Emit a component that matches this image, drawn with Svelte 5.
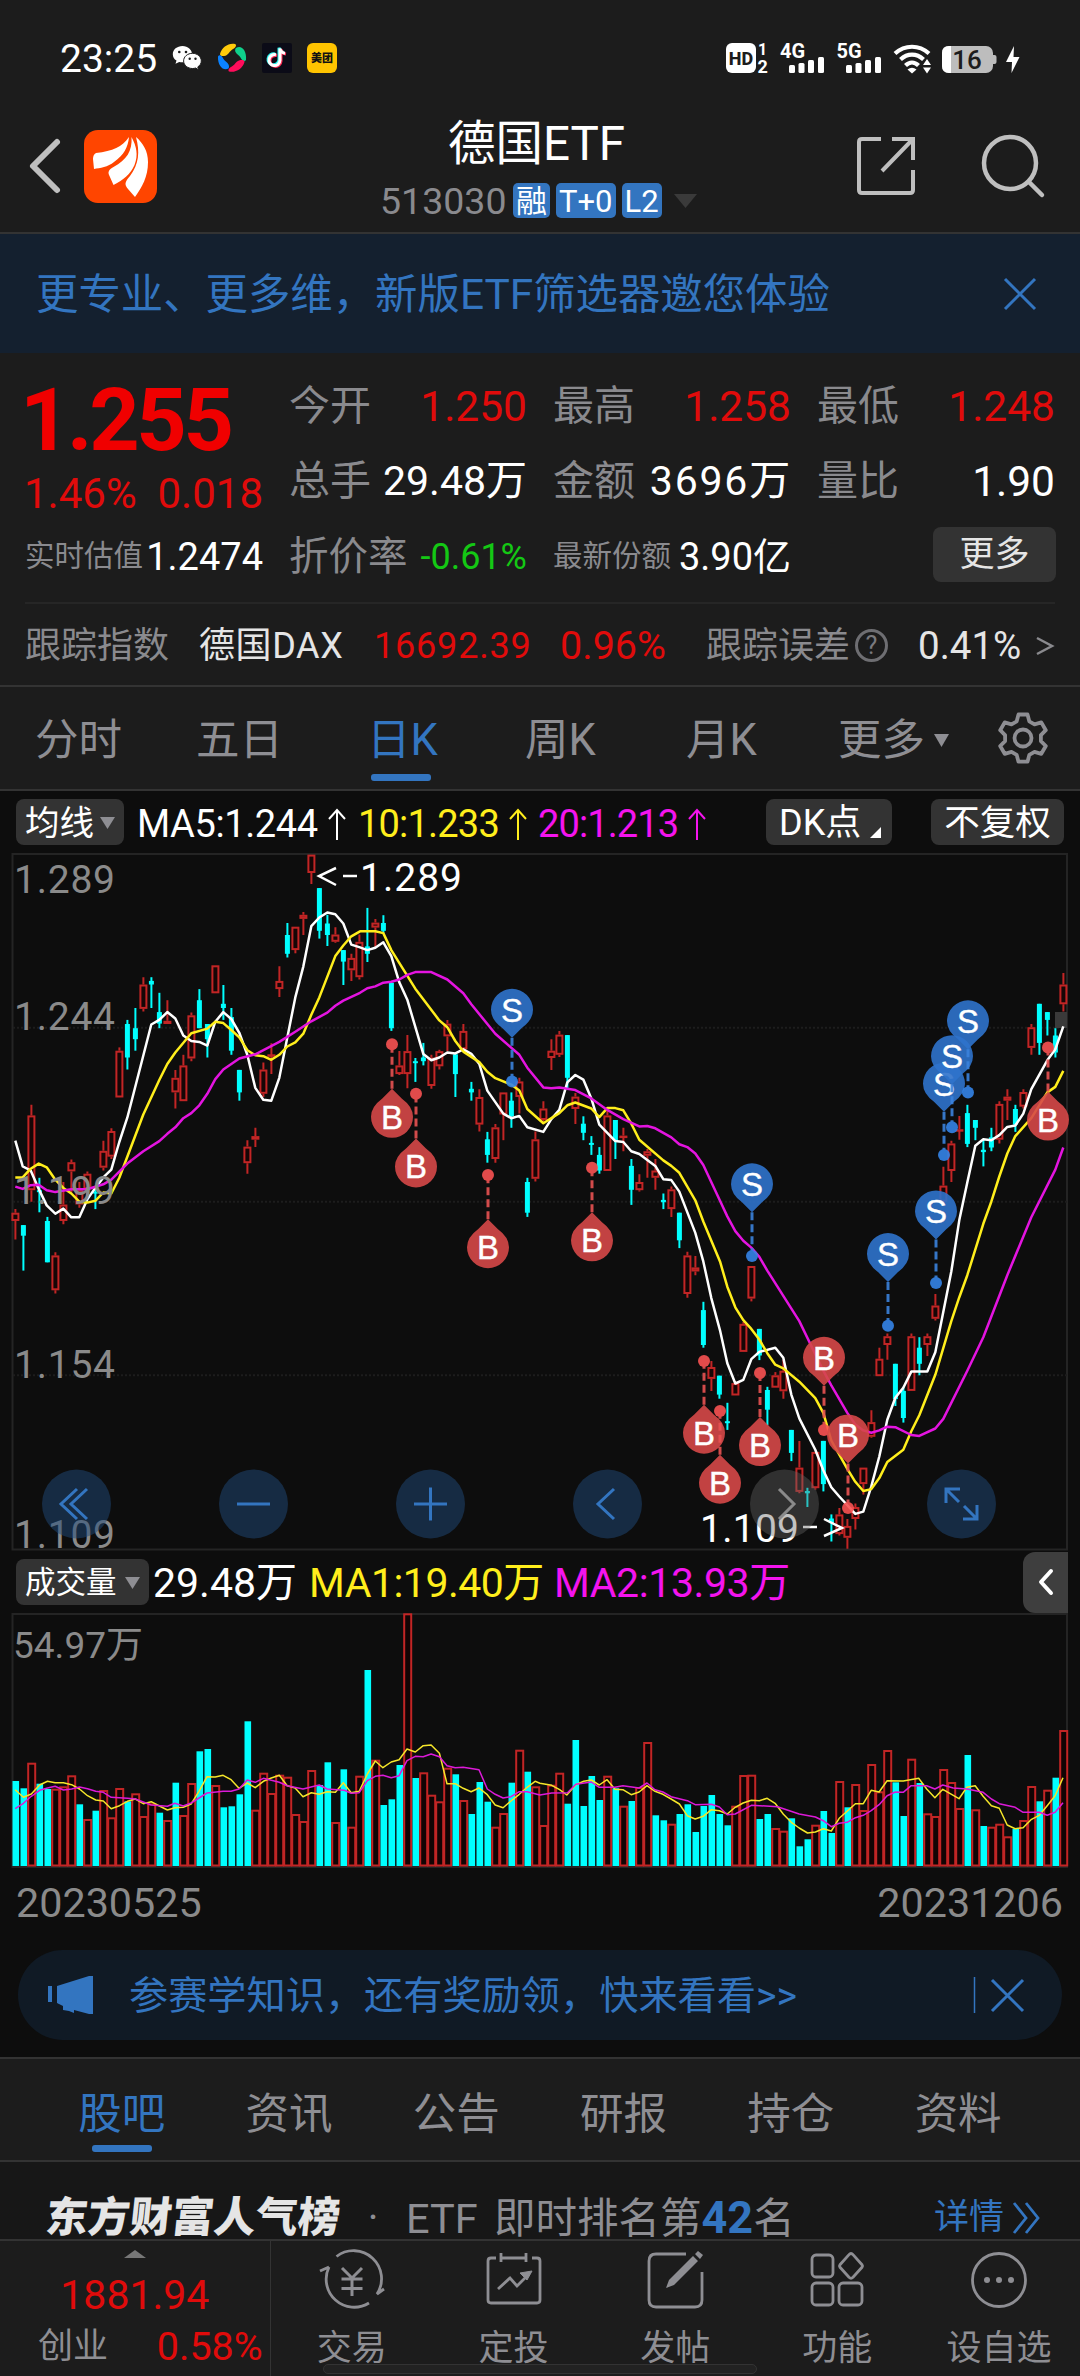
<script lang="ts">
	/**
	 * ETF quote screen: header, quote figures, daily K-line chart with
	 * moving averages and buy / sell pins, volume chart, tabs and toolbar.
	 */

	type Bar = { x: number; high: number; top: number; bottom: number; low: number; up: boolean };
	type Pin = { x: number; y: number; dot: number; kind: 'B' | 'S' };

	const STEP = 8;
	const px = (n: number) => Math.round(n * 10) / 10;
	const priceY = (v: number) => px(v / 2.178 - 14);
	const volumeY = (v: number) => px(v / 3 - 74);

	// high, body top, body bottom, low, direction
	const candleData = `
		806,814,832,872,u 841,841,864,940,d 579,602,765,790,u 738,765,768,813,d 823,832,922,922,d 900,907,983,990,u
		747,796,832,839,u 698,704,724,770,u 747,765,796,803,u 724,729,763,780,u 760,768,772,806,d 657,679,716,722,u
		630,636,692,697,u 454,461,563,563,u 394,403,476,502,d 368,412,436,461,d 301,317,370,376,u 301,309,317,368,d
		335,377,402,412,d 351,396,403,403,u 503,520,552,587,u 470,493,571,571,u 378,384,478,484,u 327,351,412,412,d
		403,403,436,476,d 275,275,336,336,u 318,359,368,394,d 368,388,461,470,d 503,503,552,570,d 656,670,706,729,u
		629,647,655,671,u 487,502,555,562,u 445,469,469,512,u 277,309,327,344,u 183,209,250,258,d 191,191,242,249,u
		159,165,174,209,u 34,34,74,98,u 107,107,200,217,d 165,184,209,233,d 192,208,224,226,u 242,242,267,318,d
		250,259,286,309,u 208,224,301,306,u 150,234,250,268,d 174,182,193,235,u 166,183,200,205,d 313,313,412,418,d
		462,493,512,514,u 427,462,512,543,u 477,484,488,529,d 444,476,484,493,d 470,476,538,544,u 459,462,495,502,u
		394,402,430,462,u 469,469,512,562,d 403,418,458,462,u 529,544,552,570,d 545,562,622,637,u 638,654,688,705,d
		621,628,697,705,u 552,552,600,656,u 552,570,604,629,d 520,528,562,598,u 738,747,814,823,d 637,654,740,746,u
		571,587,612,615,u 436,461,477,503,u 418,426,470,475,u 427,427,520,545,d 553,561,588,621,u 604,620,640,656,d
		647,662,666,688,d 671,688,722,729,d 590,602,723,723,u 612,612,656,697,d 629,646,647,680,u 697,712,764,797,d
		730,747,765,768,u 675,680,690,738,u 697,722,738,764,u 772,786,791,806,d 757,763,806,823,u 814,814,874,891,d
		899,907,991,999,u 908,933,942,950,u 1008,1026,1102,1108,d 1137,1150,1176,1202,u 1169,1169,1210,1219,d 1228,1268,1272,1287,d
		1185,1185,1212,1212,u 1052,1056,1117,1117,u 930,930,1001,1007,u 1067,1067,1125,1135,d 1193,1200,1243,1277,d 1161,1168,1195,1195,u
		1135,1158,1203,1219,u 1287,1287,1337,1355,d 1311,1369,1422,1425,u 1413,1420,1425,1455,d 1335,1335,1414,1417,u 1311,1311,1405,1421,d
		1471,1480,1490,1530,d 1457,1471,1514,1517,u 1481,1496,1522,1546,u 1447,1455,1481,1504,u 1369,1369,1405,1428,u 1244,1270,1302,1304,u
		1108,1132,1170,1170,u 1077,1083,1102,1134,u 1143,1143,1220,1235,d 1193,1202,1261,1271,d 1077,1083,1202,1202,u 1085,1108,1143,1168,d
		1077,1083,1102,1126,u 991,1016,1045,1049,u 714,755,790,795,u 657,663,723,747,u 603,632,634,655,u 579,597,664,671,d
		612,612,629,656,d 655,677,682,713,d 629,650,672,680,d 571,577,655,663,u 545,561,570,612,u 579,588,622,638,d
		545,551,583,587,u 403,410,455,470,u 359,359,444,470,d 377,377,394,428,d 412,428,465,476,d 292,317,360,376,u`;

	const candles: Bar[] = candleData
		.trim()
		.split(/\s+/)
		.map((row, i) => {
			const [h, t, b, l, dir] = row.split(',');
			return {
				x: px(15.4 + i * STEP),
				high: priceY(+h),
				top: priceY(+t),
				bottom: priceY(+b),
				low: priceY(+l),
				up: dir === 'u'
			};
		});

	// Each average is stored as panels; x restarts at 0 in every panel
	function line(panels: string[], panelWidth: number, fx: number, fy: (v: number) => number) {
		return panels
			.flatMap((panel, p) =>
				panel.split(' ').map((pair) => {
					const [x, y] = pair.split(',').map(Number);
					return `${px((x + p * panelWidth) / fx)},${fy(y)}`;
				})
			)
			.join(' ');
	}

	const ma5 = line(
		[
			'46,657 68,713 92,722 116,762 140,798 166,816 190,805 214,824 238,824 262,785 286,760 310,737 334,720 358,660 382,607 454,404 478,394 502,377 526,391 550,428 574,440 598,442 622,450 646,398 670,377 694,392 718,422 742,470 766,542 790,568 814,570 838,520 886,345 910,278 934,190 958,171 982,160 1006,164 1030,184 1054,230 1080,236',
			'22,242 46,237 70,225 94,255 118,312 142,350 190,468 214,482 238,476 262,465 286,467 310,458 334,468 358,490 382,548 430,598 454,608 478,603 502,628 550,638 574,610 598,590 622,530 646,514 670,524 694,565 718,622 766,658 790,660 814,680 838,686 886,712 910,741 934,743 958,768 1006,858 1030,920 1054,1000 1080,1070',
			'22,1142 46,1186 70,1178 94,1133 118,1117 166,1108 190,1130 214,1210 238,1262 286,1330 310,1375 334,1412 358,1432 406,1470 430,1465 454,1410 478,1345 502,1265 526,1217 550,1195 574,1160 622,1160 646,1118 694,942 718,830 742,748 766,668 790,654 814,656 838,645 862,627 886,624 910,598 934,545 982,482 1006,458 1030,408'
		],
		1080,
		3,
		priceY
	);
	const ma10 = line(
		[
			'46,737 68,737 92,718 116,707 140,715 166,742 190,760 214,772 238,790 262,792 286,788 310,770 334,772 358,738 382,692 430,600 478,525 502,490 526,465 574,423 622,413 646,398 670,401 694,416 718,432 742,460 766,471 790,473 814,481 838,470 862,452 886,443 910,424 934,383 958,345 1006,255 1030,232 1054,212 1080,201',
			'46,201 70,205 94,242 166,326 238,395 262,410 286,440 310,463 358,486 382,507 406,521 454,535 478,548 502,588 550,619 598,597 622,580 646,574 694,587 718,606 742,586 766,586 790,591 814,620 838,655 910,700 934,712 958,727 1006,787 1030,833 1080,920',
			'22,975 46,1020 70,1048 94,1067 118,1090 142,1120 166,1145 190,1153 238,1182 286,1218 310,1250 334,1310 382,1372 406,1400 430,1420 454,1416 478,1392 502,1357 550,1330 574,1290 598,1255 646,1167 694,1050 718,998 742,950 790,838 814,790 838,735 862,685 886,647 934,608 982,552 1006,540 1030,505'
		],
		1080,
		3,
		priceY
	);
	const ma20 = line(
		[
			'46,757 68,762 92,754 116,753 140,765 166,769 214,763 262,763 310,752 334,742 382,707 430,680 478,658 502,642 526,628 550,608 574,597 598,580 622,555 646,523 670,502 718,478 766,469 838,442 886,420 934,397 982,378 1006,363 1030,352 1080,335',
			'22,325 46,321 70,313 94,311 118,306 142,296 166,290 214,290 262,306 310,336 334,360 406,424 478,470 502,498 550,541 574,543 598,541 646,547 694,565 742,590 790,610 838,626 862,625 886,630 934,650 958,665 982,671 1006,685 1030,710 1080,788',
			'22,822 46,854 70,875 94,890 118,910 142,940 190,995 238,1050 310,1158 334,1190 382,1250 406,1275 430,1288 454,1293 478,1288 502,1280 526,1281 574,1298 598,1300 646,1284 670,1263 742,1158 790,1085 862,950 934,824 1006,720 1030,672'
		],
		1080,
		3,
		priceY
	);

	const pinData: [number, number, number, 'B' | 'S'][] = [
		[1176, 605, 447, 'B'],
		[1248, 713, 555, 'B'],
		[1464, 889, 732, 'B'],
		[1776, 874, 716, 'B'],
		[2112, 1293, 1137, 'B'],
		[2160, 1402, 1246, 'B'],
		[2280, 1320, 1163, 'B'],
		[3144, 611, 454, 'B'],
		[2472, 1130, 1287, 'B'],
		[2544, 1299, 1457, 'B'],
		[1536, 372, 528, 'S'],
		[2256, 752, 908, 'S'],
		[2664, 904, 1060, 'S'],
		[2808, 811, 967, 'S'],
		[2832, 533, 688, 'S'],
		[2856, 473, 628, 'S'],
		[2904, 397, 552, 'S']
	];
	const pins: Pin[] = pinData.map(([x, y, dot, kind]) => ({
		x: px(x / 3),
		y: priceY(y),
		dot: priceY(dot),
		kind
	}));

	const volumeData =
		'726d 748d 674u 734d 750d 752u 745u 712u 796d 843u 815d 756u 838u 750u 787d 766u 834u 796u 821d 846u 731d 831u 735u 637d 630d 741u 805d 802d 766d 547d 815u 704u 765u 710u 716u 828u 849u 696u 738d 670d 852u 691d 866u 713u 393d 665u 798d 781d 678d 226u 717d 703u 770u 790u 689u 706d 786u 825d 729d 788d 866u 825u 731d 635u 698d 745u 861u 740u 704u 794d 603d 801d 711d 783d 713u 748d 803u 786d 747u 612u 829d 844d 857u 825d 796d 879d 801d 768d 825d 859d 803u 711u 710u 840d 825d 870u 878u 838d 922d 901d 860u 816d 882d 729u 805d 738u 816u 678u 760u 636u 730d 831d 662u 732d 826u 834u 693u 732u 810u 648d 814u 861d 866u 857u 895u 870d 846u 744u 787d 755u 716d 576u';
	const volumes = volumeData.split(' ').map((v, i) => ({
		x: px(15.7 + i * STEP),
		top: volumeY(parseInt(v)),
		up: v.endsWith('u')
	}));

	const volMa1 = line(
		[
			'44,752 68,775 91,765 115,738 138,727 160,731 184,731 208,737 231,750 254,770 278,783 300,786 323,809 347,800 370,787 393,780 416,794 439,788 463,801 486,813 508,806 532,805 555,795 578,757 601,713 625,714 648,709 671,722 694,748 718,732 741,746 765,727 788,717 811,709 834,740 857,747 880,773 904,761 927,766 950,758 974,760 997,731 1020,761 1043,757 1067,705 1090,666 1112,686 1136,669 1159,662 1182,630 1206,639 1229,620 1252,618 1276,643 1298,734 1322,734 1345,748 1368,758 1391,747 1415,767 1438,798 1461,806 1484,786 1508,766 1531,745 1554,727',
			'0,733 34,739 57,752 78,768 104,737 127,727 149,723 172,738 195,722 218,751 241,752 265,767 288,759 311,740 334,757 357,766 381,780 405,795 428,830 451,840 474,832 498,812 521,815 544,825 567,805 590,792 614,784 637,785 660,778 683,793 707,826 730,850 753,867 777,882 800,879 823,869 846,876 869,838 892,817 916,794 939,794 962,754 985,759 1008,725 1055,726 1100,718 1123,750 1147,776 1170,751 1217,779 1240,745 1264,740 1287,772 1311,800 1334,808 1357,858 1380,869 1403,866 1426,842 1450,829 1473,800 1496,770 1519,716'
		],
		1568,
		2.904,
		volumeY
	);
	const volMa2 = line(
		[
			'44,809 68,793 91,772 115,754 138,747 160,742 184,753 208,750 231,744 254,749 278,757 300,760 323,775 370,778 393,780 439,798 486,802 508,793 532,801 555,792 601,762 648,757 671,757 694,750 718,723 741,730 765,718 811,730 834,740 880,750 927,738 950,750 1000,754 1020,763 1043,761 1067,725 1090,712 1112,709 1136,716 1159,710 1182,665 1206,652 1229,653 1252,645 1276,653 1298,680 1322,686 1345,685 1391,692 1415,750 1438,766 1461,777 1484,773 1508,758 1531,758',
			'0,768 34,762 80,761 104,736 149,729 172,745 218,745 241,740 288,747 311,732 334,752 357,759 381,773 428,785 451,797 498,796 521,804 544,827 567,825 614,799 690,803 753,825 800,834 823,845 846,863 869,853 892,850 916,836 939,829 962,815 985,797 1008,770 1032,759 1055,760 1078,740 1123,740 1147,750 1170,738 1200,747 1240,750 1287,760 1311,780 1334,794 1380,805 1403,820 1450,820 1473,829 1496,820 1519,791'
		],
		1568,
		2.904,
		volumeY
	);

	const axis = [
		{ label: '1.289', y: 40 },
		{ label: '1.244', y: 177 },
		{ label: '1.199', y: 351 },
		{ label: '1.154', y: 525 },
		{ label: '1.109', y: 695 }
	];

	const averages = [
		{ text: 'MA5:1.244', color: '#ffffff' },
		{ text: '10:1.233', color: '#ffee1c' },
		{ text: '20:1.213', color: '#f414ee' }
	];

	const bottomTabs = ['股吧', '资讯', '公告', '研报', '持仓', '资料'];
	const tools = ['交易', '定投', '发帖', '功能', '设自选'];
</script>

<div class="screen">
	<header>
		<div class="status">
			<span class="time">23:25</span>
			<svg class="apps" width="166" height="32" viewBox="172 42 166 32">
				<g fill="#fff">
					<path d="M182.500 46c-5.500 0-9.700 3.600-9.700 8.200 0 2.700 1.400 4.900 3.700 6.400l-1 3.200 3.700-1.900c1 .3 2 .4 3.300.4 5.500 0 9.500-3.600 9.500-8.100s-4-8.200-9.500-8.200z" />
					<path d="M192.500 53.300c-4.900 0-8.900 3.400-8.900 7.600s4 7.600 8.900 7.600c1.100 0 2.100-.1 3.100-.5l3 1.800-.8-2.900c2.200-1.400 3.500-3.500 3.500-6 0-4.200-4-7.600-8.800-7.600z" stroke="#1c1c1c" stroke-width="1" />
				</g>
				<g fill="#1c1c1c">
					<circle cx="179.300" cy="52" r="1.300" /><circle cx="186" cy="52" r="1.300" />
					<circle cx="189.700" cy="58.700" r="1.200" /><circle cx="195.500" cy="58.700" r="1.200" />
				</g>
				<path d="M220 54c2-7 9-11.500 15.500-9.800 1.500 1.500-.5 3.800-3.500 5.500-2.500 1.500-3.500 5-6.500 6-3 .9-5.500.3-5.500-1.700z" fill="#ffcb0b" />
				<path d="M236 48c5-3.500 11 2 10 12-1.500 2.500-4 .5-5.500-2.500-1.300-2.500-4-3-5-5.500-.6-1.500-.5-3 .5-4z" fill="#0fd18c" />
				<path d="M244.500 62c-2 7-9 11-15.500 9.500-1.500-1.500.5-3.800 3.500-5.500 2.500-1.500 3.500-4.500 6.500-5.500 3-.9 5.500-.5 5.500 1.500z" fill="#ff0d5b" />
				<path d="M228.500 68.500c-5 3-11-2.500-10.500-12 1.500-2.500 4-.5 5.500 2.500 1.300 2.500 4 3 5 5.500.6 1.500.8 2.700 0 4z" fill="#0a82ff" />
				<rect x="262" y="43" width="30" height="30" rx="2" fill="#0b0b17" />
				<g fill="none" stroke-width="3">
					<path d="M276 54.800a5.500 5.500 0 1 0 4 5.500V48.500c.7 3 2.500 4.500 5 4.800" stroke="#2bf3ee" transform="translate(-1 -.8)" />
					<path d="M276 54.800a5.500 5.500 0 1 0 4 5.500V48.500c.7 3 2.500 4.500 5 4.800" stroke="#fe2c55" transform="translate(1 .8)" />
					<path d="M276 54.800a5.500 5.500 0 1 0 4 5.500V48.500c.7 3 2.500 4.500 5 4.800" stroke="#fff" />
				</g>
				<rect x="307" y="43" width="30" height="30" rx="6" fill="#ffc400" />
				<text x="322" y="62" font-size="11" font-weight="900" text-anchor="middle" fill="#111">美团</text>
			</svg>
			<svg class="signals" width="296" height="34" viewBox="726 41 296 34" fill="#fff">
				<rect x="726" y="43" width="30" height="30" rx="6" />
				<text x="741" y="65" font-size="18" font-weight="800" text-anchor="middle" fill="#1c1c1c">HD</text>
				<text x="758" y="55" font-size="16" font-weight="700">1</text>
				<text x="757.500" y="73" font-size="18" font-weight="700">2</text>
				<text x="780" y="58" font-size="20" font-weight="700">4G</text>
				<text x="836.500" y="58" font-size="20" font-weight="700">5G</text>
				{#each [789, 846] as sx}
					<rect x={sx} y="65" width="6" height="8" rx="1.500" />
					<rect x={sx + 9.5} y="63" width="6" height="10" rx="1.500" />
					<rect x={sx + 19} y="60" width="6" height="13" rx="1.500" />
					<rect x={sx + 29} y="57" width="6" height="16" rx="1.500" />
				{/each}
				<g fill="none" stroke="#fff" stroke-width="4.200">
					<path d="M895 53.500c10-9 24-9 34 0" />
					<path d="M900.500 59.500c7-6.500 16-6.500 23 0" />
					<path d="M905.500 65.500c4-4 9-4 13 0" />
				</g>
				<path d="M907.500 69.500q4.500-3.500 9 0l-4.500 4z" />
				<path d="M923 65l4-6 4 6zM923 67.500l4 6 4-6z" />
				<rect x="942" y="46" width="51" height="27" rx="7" fill="#bdbdbd" />
				<path d="M993 55h1.500q2 0 2 2v5q0 2-2 2H993z" fill="#bdbdbd" />
				<path d="M951 46h-2q-7 0-7 7v13q0 7 7 7h2z" />
				<text x="967" y="69" font-size="26" font-weight="500" text-anchor="middle" fill="#1c1c1c">16</text>
				<path d="M1014 46l-8 16h6l-.500 11 8-16h-6z" />
			</svg>
		</div>

		<div class="titlebar">
			<svg width="32" height="56" viewBox="0 0 32 56" fill="none" stroke="#bfbfbf" stroke-width="6" stroke-linecap="round" stroke-linejoin="round"><path d="M28 4L4 28l24 24" /></svg>
			<svg class="logo" width="73" height="73" viewBox="0 0 73 73">
				<rect width="73" height="73" rx="14" fill="#ff4500" />
				<g fill="#fff">
					<path d="M45 7c-7 10-16 14-33 16-2 1-3 3-3 6l1 10c6-1 14-2 20-7C40 25 44 17 45 7z" />
					<path d="M47.500 7c1 14-5 23-18 30-5 3-6 5-4 9l4 9c10-5 17-11 21-20 4-10 2-19-3-28z" />
					<path d="M52 7c4 15 3 27-6 39-5 6-6 8-2 13l7 8c7-10 13-20 13-35 0-11-5-19-12-25z" />
				</g>
			</svg>
			<div class="name">
				<h1>德国ETF</h1>
				<div class="code">
					<span>513030</span><b>融</b><b>T+0</b><b>L2</b>
					<svg width="23" height="14" viewBox="0 0 23 14"><path d="M0 0h23L11.500 14z" fill="#3a3a3a" /></svg>
				</div>
			</div>
			<svg class="share" width="58" height="58" viewBox="0 0 58 58" fill="none" stroke="#bfbfbf" stroke-width="4"><path d="M24 2H5q-3 0-3 3v48q0 3 3 3h48q3 0 3-3V33M35 2h21v21M56 2L25 34" /></svg>
			<svg width="64" height="64" viewBox="0 0 64 64" fill="none" stroke="#bfbfbf" stroke-width="4.500" stroke-linecap="round"><circle cx="29" cy="29" r="26" /><path d="M48 48l13 13" /></svg>
		</div>
	</header>

	<div class="promo">
		<span>更专业、更多维，新版ETF筛选器邀您体验</span>
		<svg width="32" height="32" viewBox="0 0 32 32" fill="none" stroke="#3375c0" stroke-width="3"><path d="M1 1l30 30M31 1L1 31" /></svg>
	</div>

	<section class="quote">
		<div class="figures">
			<div class="last">
				<strong>1.255</strong>
				<p><span>1.46%</span><span>0.018</span></p>
			</div>
			<div class="pair"><em>今开</em><span class="up">1.250</span></div>
			<div class="pair"><em>最高</em><span class="up">1.258</span></div>
			<div class="pair"><em>最低</em><span class="up">1.248</span></div>
			<div class="pair"><em>总手</em><span>29.48万</span></div>
			<div class="pair"><em>金额</em><span class="amount">3696万</span></div>
			<div class="pair"><em>量比</em><span class="ratio">1.90</span></div>
			<div class="pair small"><em>实时估值</em><span>1.2474</span></div>
			<div class="pair medium"><em>折价率</em><span class="down">-0.61%</span></div>
			<div class="pair small"><em>最新份额</em><span>3.90亿</span></div>
			<div class="pair end"><button>更多</button></div>
		</div>
		<div class="tracking">
			<em>跟踪指数</em>
			<span class="index">德国DAX</span>
			<span class="up value">16692.39</span>
			<span class="up change">0.96%</span>
			<em class="error">跟踪误差</em>
			<i>?</i>
			<span class="rate">0.41%</span>
			<svg width="18" height="20" viewBox="0 0 18 20" fill="none" stroke="#8a8a8e" stroke-width="2.500"><path d="M1 2l15 8-15 8" /></svg>
		</div>
	</section>

	<nav class="periods">
		<span>分时</span>
		<span>五日</span>
		<span class="active">日K</span>
		<span>周K</span>
		<span>月K</span>
		<span class="more">更多<svg width="15" height="13" viewBox="0 0 15 13"><path d="M0 0h15L7.500 13z" fill="#8e8e93" /></svg></span>
		<svg class="gear" width="52" height="52" viewBox="0 0 52 52" fill="none" stroke="#8e8e93" stroke-width="3.800" stroke-linejoin="round">
			<path d="M21.500 2.500h9l1.800 6.800 5.200 3 6.800-1.900 4.500 7.800-4.900 4.900v6l4.900 4.900-4.500 7.800-6.800-1.900-5.200 3-1.800 6.800h-9l-1.800-6.800-5.200-3-6.800 1.900-4.500-7.800 4.900-4.900v-6l-4.900-4.900 4.500-7.800 6.800 1.900 5.200-3z" />
			<circle cx="26" cy="26" r="8.500" />
		</svg>
	</nav>

	<main>
		<div class="legend">
			<button class="drop">均线<svg width="15" height="12" viewBox="0 0 15 12"><path d="M0 0h15L7.500 12z" fill="#8e8e93" /></svg></button>
			{#each averages as ma}
				<span class="ma" style="color: {ma.color}">{ma.text}<svg width="18" height="32" viewBox="0 0 18 32" fill="none" stroke="currentColor" stroke-width="2"><path d="M9 32V2M1 11l8-9 8 9" /></svg></span>
			{/each}
			<button class="dk">DK点<svg width="11" height="11" viewBox="0 0 11 11"><path d="M11 0v11H0z" fill="#fff" /></svg></button>
			<button class="adjust">不复权</button>
		</div>

		<svg class="kline" width="1080" height="698" viewBox="0 0 1080 698">
			<rect x="12.500" y="1" width="1054.500" height="695.500" fill="none" stroke="#242424" stroke-width="2" />
			{#each [411, 790, 1168] as gy}
				<path d="M13 {priceY(gy)}H1067" stroke="#1d1d1d" stroke-width="2" stroke-dasharray="2 2" />
			{/each}

			{#each candles as c}
				{#if c.up}
					<path d="M{c.x} {c.high}V{c.top}M{c.x} {c.bottom}V{c.low}" stroke="#c22525" stroke-width="2" />
					<rect x={c.x - 3} y={c.top + 1} width="6" height={Math.max(c.bottom - c.top - 2, 0.5)} fill="#160606" stroke="#c22525" stroke-width="2" />
				{:else}
					<path d="M{c.x} {c.high}V{c.low}" stroke="#00ffff" stroke-width="2" />
					<rect x={c.x - 2.5} y={c.top} width="5" height={Math.max(c.bottom - c.top, 2)} fill="#00ffff" />
				{/if}
			{/each}
			<rect x="1055" y="159" width="12" height="16" fill="#3a3a3a" />

			<g fill="none" stroke-width="2.500" stroke-linejoin="round">
				<polyline points={ma5} stroke="#fff" />
				<polyline points={ma10} stroke="#ffee1c" />
				<polyline points={ma20} stroke="#e414e0" />
			</g>

			<g fill="#8a8a8a" font-size="39">
				{#each axis as a}
					<text x="14" y={a.y} textLength="101">{a.label}</text>
				{/each}
			</g>
			<g fill="none" stroke="#fff" stroke-width="2.500"><path d="M336 15l-17 8 17 9M343 23h14" /></g>
			<text x="360" y="38" font-size="39" textLength="102" fill="#fff">1.289</text>
			<text x="700" y="689" font-size="39" textLength="99" fill="#fff">1.109</text>
			<g fill="none" stroke="#fff" stroke-width="2.500"><path d="M803 674h14M824 666l18 9-18 8" /></g>

			{#each pins as p}
				{@const dir = p.dot > p.y ? 1 : -1}
				{@const fill = p.kind === 'B' ? '#d64848' : '#2f73cc'}
				<g opacity="0.9">
					<path d="M{p.x} {p.y + dir * 28}V{p.dot}" stroke={p.kind === 'B' ? '#e85252' : '#3b82dc'} stroke-width="3" stroke-dasharray="8 4" />
					<path d="M{p.x - 21} {p.y}a21 21 0 0 1 42 0q0 10 -11 18L{p.x} {p.y + 28}L{p.x - 10} {p.y + 18}q-11 -8 -11 -18z" {fill} transform={dir > 0 ? undefined : `rotate(180 ${p.x} ${p.y})`} />
					<circle cx={p.x} cy={p.dot} r="6" fill={p.kind === 'B' ? '#f85252' : '#3484e8'} />
				</g>
				<text class="pin" x={p.x} y={p.y + 12} font-size="33" stroke="#fff" stroke-width=".4" text-anchor="middle" fill="#fff">{p.kind}</text>
			{/each}

			<g fill="#1f4a7a" fill-opacity=".5">
				{#each [76.5, 253.5, 430.5, 607.5, 961.5] as cx}
					<circle {cx} cy="651" r="34.500" />
				{/each}
			</g>
			<circle cx="784.500" cy="651" r="34.500" fill="#666" fill-opacity=".4" />
			<g fill="none" stroke="#3375c0" stroke-width="3">
				<path d="M77 636l-16 15 16 15M87 636l-16 15 16 15" />
				<path d="M237 651h33" />
				<path d="M414 651h33M430.500 634.500v33" />
				<path d="M614 636l-16 15 16 15" />
				<path d="M946 650v-14h14M946 636l13 13M977 652v14h-14M977 666l-13-13" />
			</g>
			<path d="M779 636l15 15-15 15" fill="none" stroke="#8a8a8a" stroke-width="3" />
		</svg>

		<div class="legend volume-legend">
			<button class="drop">成交量<svg width="15" height="12" viewBox="0 0 15 12"><path d="M0 0h15L7.500 12z" fill="#8e8e93" /></svg></button>
			<span class="vol white">29.48万</span>
			<span class="vol yellow">MA1:19.40万</span>
			<span class="vol magenta">MA2:13.93万</span>
			<div class="fold"><svg width="16" height="28" viewBox="0 0 16 28" fill="none" stroke="#fff" stroke-width="4" stroke-linecap="round" stroke-linejoin="round"><path d="M13 3L3 14l10 11" /></svg></div>
		</div>

		<svg class="volume" width="1080" height="256" viewBox="0 0 1080 256">
			<rect x="12.500" y="1" width="1054.500" height="253" fill="none" stroke="#242424" stroke-width="2" />
			{#each volumes as v}
				{#if v.up}
					<rect x={v.x - 3.5} y={v.top} width="7" height={252.5 - v.top} fill="#120404" stroke="#c22525" stroke-width="2" />
				{:else}
					<rect x={v.x - 3.2} y={v.top} width="6.600" height={253 - v.top} fill="#00ffff" />
				{/if}
			{/each}
			<g fill="none" stroke-width="1.500" stroke-linejoin="round">
				<polyline points={volMa1} stroke="#f5e62a" />
				<polyline points={volMa2} stroke="#dc1ad8" />
			</g>
			<text x="13" y="45" font-size="37" textLength="130" fill="#8a8a8a">54.97万</text>
		</svg>
		<div class="dates"><span>20230525</span><span>20231206</span></div>

		<div class="notice">
			<svg width="46" height="42" viewBox="0 0 46 42" fill="#3375c0">
				<path d="M0 12h4v16H0zM9 12L41 2h4v38h-4l-15-4v3l-5-2-6-1v-4l-6-3z" />
			</svg>
			<span>参赛学知识，还有奖励领，快来看看&gt;&gt;</span>
			<svg class="close" width="52" height="36" viewBox="0 0 52 36" fill="none" stroke="#3375c0" stroke-width="3"><path d="M1.500 0v36" stroke-width="1.500" /><path d="M19 3l31 31M50 3L19 34" /></svg>
		</div>
	</main>

	<nav class="sections">
		{#each bottomTabs as tab, i}
			<span class:active={i === 0}>{tab}</span>
		{/each}
	</nav>

	<div class="rank">
		<strong>东方财富人气榜</strong>
		<span class="dot">·</span>
		<span class="text">ETF 即时排名第<b>42</b>名</span>
		<span class="detail">详情</span>
		<svg width="30" height="32" viewBox="0 0 30 32" fill="none" stroke="#3375c0" stroke-width="2.800"><path d="M2 1l12 15L2 31M14 1l12 15-12 15" /></svg>
	</div>

	<footer>
		<div class="market">
			<svg width="22" height="8" viewBox="0 0 22 8"><path d="M0 8L11 0l11 8z" fill="#777" /></svg>
			<span class="up points">1881.94</span>
			<p><span>创业</span><span class="up">0.58%</span></p>
		</div>
		{#each tools as tool, i}
			<div class="tool">
				<svg width="66" height="60" viewBox="0 0 66 60" fill="none" stroke="#8e8e93" stroke-width="2.800">
					{#if i === 0}
						<path d="M17.500 6.500A28 28 0 0 1 58 44l7-5M10 17l-9 4M10 17A28 28 0 0 0 50 53" />
						<path d="M23 18l10 10 10-10M22.500 29h21M22.500 38.500h21M33 28v18" stroke-width="3" />
					{:else if i === 1}
						<path d="M15 8H10q-3 0-3 3v39q0 3 3 3h46q3 0 3-3V11q0-3-3-3h-5M20 3v9M45 3v9M20 8h25" />
						<path d="M17 39l12-11 7 8 12-12" />
						<path d="M39 23l12-2-5 9z" fill="#8e8e93" stroke-width="1" />
					{:else if i === 2}
						<path d="M44 4H14q-7 0-7 7v39q0 7 7 7h39q7 0 7-7V22" />
						<path d="M24 38l3-8L51 6l5 5-24 24zM53 4l3-3 5 4-3 4z" fill="#8e8e93" stroke="none" />
					{:else if i === 3}
						<rect x="8" y="5" width="21" height="22" rx="4" />
						<rect x="8" y="33" width="21" height="22" rx="4" />
						<rect x="35" y="33" width="23" height="22" rx="4" />
						<path d="M47 3.500q1 0 2 1.200l9 10q1 1.300 0 2.600l-9 10q-2 2-4 0l-9-10q-1-1.300 0-2.600l9-10q1-1.200 2-1.200z" />
					{:else}
						<circle cx="33" cy="30" r="26.500" />
						<g fill="#8e8e93" stroke="none"><circle cx="21" cy="30" r="3" /><circle cx="33" cy="30" r="3" /><circle cx="45" cy="30" r="3" /></g>
					{/if}
				</svg>
				<span>{tool}</span>
			</div>
		{/each}
		<div class="home"></div>
	</footer>
</div>

<style>
	:global(body) {
		margin: 0;
		background: #0d0d0d;
	}

	.screen {
		width: 1080px;
		height: 2376px;
		overflow: hidden;
		display: flex;
		flex-direction: column;
		background: #1c1c1c;
		color: #fff;
		font-family: Roboto, 'Noto Sans CJK SC', sans-serif;
		line-height: 1;
		white-space: nowrap;
	}

	.screen * {
		box-sizing: border-box;
	}

	svg {
		display: block;
		flex: none;
		overflow: visible;
	}

	p,
	h1 {
		margin: 0;
	}

	button {
		display: flex;
		align-items: center;
		border: 0;
		border-radius: 8px;
		background: #333;
		color: #fff;
		font: inherit;
		flex: none;
	}

	.up {
		color: #e00b0b;
	}

	.down {
		color: #14c814;
	}

	/* header */
	header {
		height: 234px;
		border-bottom: 2px solid #333;
	}

	.status {
		display: flex;
		align-items: center;
		height: 116px;
		padding-left: 60px;
	}

	.time {
		width: 112px;
		padding-top: 2px;
		font-size: 39px;
	}

	.signals {
		margin-left: 388px;
	}

	.titlebar {
		display: flex;
		align-items: center;
		height: 100px;
		padding-left: 29px;
	}

	.logo {
		margin-left: 23px;
	}

	.name {
		width: 320px;
		margin: 0 155px 0 225px;
		height: 100px;
	}

	h1 {
		margin-left: 66px;
		font-size: 47.5px;
		font-weight: 400;
		height: 54px;
		line-height: 56px;
	}

	.code {
		display: flex;
		align-items: center;
		height: 35px;
		margin: 13px 0 0 -2px;
		gap: 6px;
	}

	.code span {
		width: 127px;
		padding-top: 2px;
		color: #8a8a8e;
		font-size: 37.5px;
	}

	.code b {
		height: 35px;
		padding: 0 3px;
		border-radius: 5px;
		background: #3375c0;
		font-size: 31px;
		font-weight: 400;
		line-height: 37px;
	}

	.code svg {
		margin-left: 6px;
	}

	.share {
		margin-right: 66px;
	}

	.promo {
		display: flex;
		align-items: center;
		justify-content: space-between;
		height: 120px;
		padding: 0 44px 0 36px;
		background: #14202f;
		color: #3375c0;
		font-size: 42.4px;
	}

	.promo span {
		padding-top: 4px;
	}

	/* quote */
	.quote {
		height: 334px;
		padding: 0 25px;
		border-bottom: 2px solid #333;
	}

	.figures {
		display: grid;
		grid-template-columns: repeat(4, 238px);
		grid-template-rows: repeat(3, 75px);
		column-gap: 26px;
		padding-top: 16px;
		height: 251px;
		border-bottom: 2px solid #262626;
	}

	.last {
		grid-row: span 2;
		color: #e00b0b;
	}

	.last strong {
		display: block;
		margin-left: -5px;
		color: #f00000;
		font-size: 88px;
		font-weight: 700;
		line-height: 102px;
		letter-spacing: -3.4px;
	}

	.last p {
		display: flex;
		justify-content: space-between;
		margin-left: -1px;
		font-size: 42px;
		line-height: 46px;
	}

	.pair {
		display: flex;
		align-items: center;
		justify-content: space-between;
		font-size: 41px;
	}

	.pair .up,
	.ratio {
		font-size: 42.5px;
	}

	.amount {
		margin-right: -1px;
		letter-spacing: 1.8px;
	}

	em {
		color: #8a8a8e;
		font-style: normal;
	}

	.small {
		font-size: 38px;
	}

	.small em {
		font-size: 29.5px;
	}

	.medium {
		font-size: 36px;
	}

	.medium em {
		font-size: 39.5px;
	}

	.end {
		justify-content: flex-end;
	}

	.end button {
		justify-content: center;
		width: 123px;
		height: 55px;
		font-size: 35px;
		color: #e5e5e5;
		margin: -5px -1px 0 0;
		padding: 0;
	}

	.tracking {
		display: flex;
		align-items: center;
		height: 83px;
		font-size: 36px;
	}

	.index {
		color: #e5e5e5;
		margin-left: 30px;
		width: 175px;
		letter-spacing: 0.6px;
	}

	.value {
		width: 186px;
		letter-spacing: 0.8px;
	}

	.change {
		width: 146px;
		font-size: 39.5px;
	}

	.error {
		width: 149px;
	}

	i {
		width: 33px;
		height: 33px;
		border: 3px solid #6e6e72;
		border-radius: 50%;
		color: #7a7a7e;
		font-size: 25px;
		font-style: normal;
		line-height: 27px;
		text-align: center;
	}

	.rate {
		margin-left: 30px;
		width: 118px;
		font-size: 38.5px;
		color: #e5e5e5;
	}

	/* period tabs */
	.periods {
		display: flex;
		align-items: center;
		height: 104px;
		padding-left: 35px;
		border-bottom: 2px solid #333;
		color: #8e8e93;
		font-size: 43.5px;
	}

	.periods span {
		position: relative;
		width: 161px;
		padding-top: 4px;
	}

	.periods span.active {
		width: 158px;
		margin-left: 10px;
		color: #3375c0;
	}

	.periods span.active::after {
		content: '';
		position: absolute;
		left: 4px;
		top: 59px;
		width: 60px;
		height: 7px;
		border-radius: 3px;
		background: #3375c0;
	}

	.periods .more {
		display: flex;
		align-items: center;
		gap: 9px;
		width: 159px;
		margin-left: -9px;
	}

	/* charts */
	main {
		height: 1266px;
		flex: none;
		background: #0d0d0d;
	}

	.pin {
		font-family: 'Liberation Sans', Arial, sans-serif;
	}

	.legend {
		display: flex;
		align-items: center;
		height: 62px;
		padding: 0 16px;
		font-size: 36px;
	}

	.drop {
		width: 108px;
		height: 46px;
		padding: 2px 0 0 9px;
		gap: 6px;
		font-size: 34.5px;
		margin-right: 13px;
	}

	.ma {
		display: flex;
		align-items: center;
		gap: 10px;
		width: 221px;
		padding-top: 3px;
		font-size: 38px;
		letter-spacing: -0.4px;
	}

	.ma:nth-of-type(2) {
		width: 180px;
		letter-spacing: -0.8px;
	}

	.ma:nth-of-type(3) {
		width: 228px;
		letter-spacing: -0.9px;
	}

	.dk {
		width: 126px;
		height: 46px;
		padding: 2px 0 0 13px;
		gap: 9px;
		font-size: 36px;
	}

	.dk svg {
		margin-top: 18px;
	}

	.adjust {
		justify-content: center;
		width: 133px;
		height: 46px;
		margin-left: 39px;
		padding: 2px 0 0;
		font-size: 35.5px;
	}

	.volume-legend {
		padding-right: 12px;
	}

	.volume-legend .drop {
		width: 133px;
		margin-right: 4px;
		gap: 8px;
		font-size: 30.5px;
	}

	.vol {
		padding-top: 2px;
		font-size: 41px;
	}

	.white {
		width: 156px;
	}

	.yellow {
		width: 245px;
		color: #ffee1c;
		letter-spacing: -0.5px;
	}

	.magenta {
		color: #f414ee;
		letter-spacing: -0.4px;
	}

	.fold {
		display: flex;
		align-items: center;
		justify-content: center;
		width: 45px;
		height: 61px;
		margin-left: auto;
		border-radius: 12px 0 0 12px;
		background: #3e3e3e;
	}

	.dates {
		display: flex;
		justify-content: space-between;
		padding: 14px 17px 0 16px;
		height: 81px;
		color: #8a8a8a;
		font-size: 41.3px;
	}

	.notice {
		display: flex;
		align-items: center;
		width: 1044px;
		height: 90px;
		margin: 0 18px;
		padding: 0 37px 0 30px;
		border-radius: 45px;
		background: #101a25;
		color: #3375c0;
		font-size: 39.2px;
	}

	.notice span {
		margin-left: 35px;
		padding-top: 3px;
	}

	.close {
		margin-left: auto;
	}

	/* lower tabs */
	.sections {
		display: flex;
		height: 105px;
		padding: 0 38px;
		border-top: 2px solid #333;
		border-bottom: 2px solid #333;
		color: #8e8e93;
		font-size: 43.5px;
	}

	.sections span {
		position: relative;
		width: 167.3px;
		line-height: 111px;
		text-align: center;
	}

	.sections .active {
		color: #3375c0;
	}

	.sections .active::after {
		content: '';
		position: absolute;
		left: 54px;
		bottom: 8px;
		width: 60px;
		height: 7px;
		border-radius: 3px;
		background: #3375c0;
	}

	.rank {
		display: flex;
		align-items: center;
		height: 77px;
		padding: 34px 38px 0 46px;
		overflow: hidden;
		background: #171717;
		color: #8e8e93;
		font-size: 41px;
	}

	.rank strong {
		color: #e5e5e5;
		font-size: 42px;
		font-weight: 900;
		transform: skewX(-6deg);
	}

	.dot {
		width: 66px;
		text-align: center;
	}

	.text {
		font-size: 41.5px;
		word-spacing: 6px;
	}

	.text b {
		color: #3375c0;
		font-size: 45px;
		line-height: 1;
	}

	.detail {
		margin-left: auto;
		margin-right: 8px;
		color: #3375c0;
		font-size: 35px;
	}

	footer {
		position: relative;
		display: flex;
		height: 137px;
		border-top: 2px solid #333;
		color: #8e8e93;
		font-size: 35px;
	}

	.market {
		display: flex;
		flex-direction: column;
		align-items: center;
		width: 271px;
		padding-top: 9px;
		border-right: 1px solid #333;
	}

	.points {
		margin-top: 17px;
		font-size: 41px;
	}

	.market p {
		display: flex;
		align-items: center;
		justify-content: space-between;
		width: 100%;
		margin-top: 11px;
		padding: 0 7px 0 38px;
		font-size: 35px;
	}

	.market p .up {
		font-size: 39.5px;
	}

	.tool {
		display: flex;
		flex-direction: column;
		align-items: center;
		width: 162px;
		padding-top: 9px;
		gap: 21px;
	}

	.home {
		position: absolute;
		left: 323px;
		bottom: 2px;
		width: 434px;
		height: 10px;
		border: 1px solid #333;
		border-radius: 5px;
		background: #222;
	}
</style>
